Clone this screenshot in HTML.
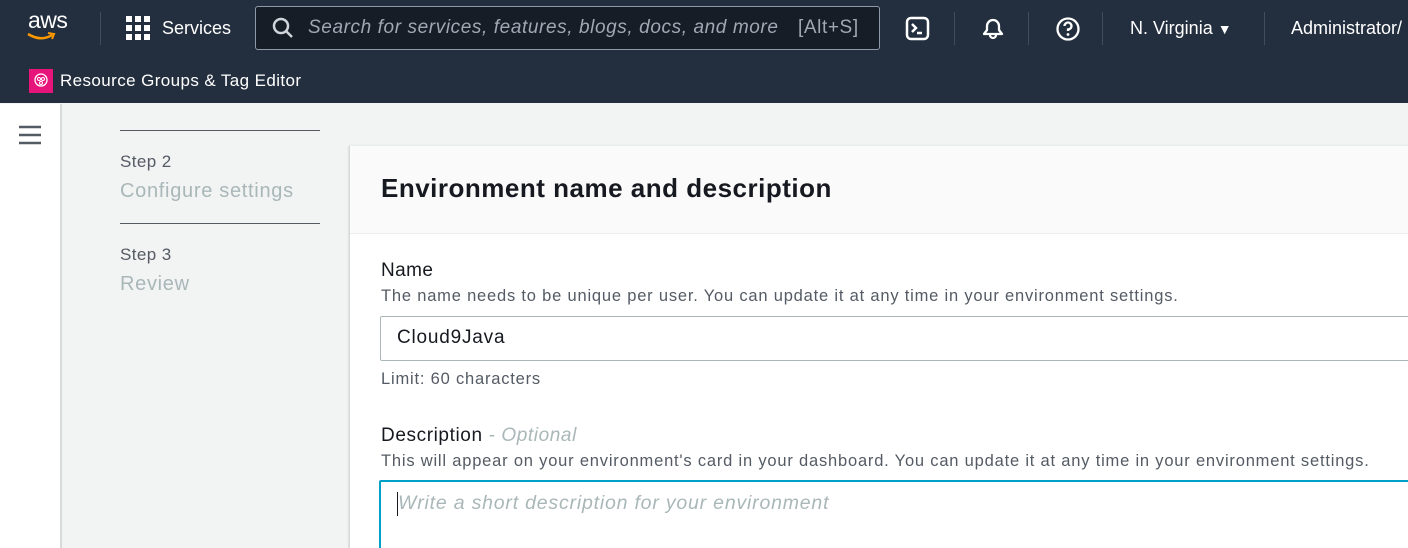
<!DOCTYPE html>
<html style="overflow:hidden;width:1408px;height:548px"><head><style>
body{margin:0;width:1408px;height:548px;overflow:hidden;background:#f2f3f3;font-family:"Liberation Sans",sans-serif;position:relative}
.top{position:absolute;left:0;top:0;width:1408px;height:103px;background:#232f3e;color:#fff}
.sep{position:absolute;top:12px;width:1px;height:33px;background:#414d5c}
.t{position:absolute;white-space:nowrap}
.d{font-size:16.5px;letter-spacing:0.8px;color:#545b64}
</style></head><body>
<div class="top">
 <div class="t" style="left:28px;top:7px;font-size:23px;letter-spacing:-0.5px">aws</div>
 <svg style="position:absolute;left:26px;top:31px" width="30" height="12"><path d="M2 3 Q15 11 26 4" stroke="#ff9900" stroke-width="2.5" fill="none"/><path d="M22 2 L28 3 L26 8" stroke="#ff9900" stroke-width="2" fill="none"/></svg>
 <div class="sep" style="left:100px"></div>
 <svg style="position:absolute;left:126px;top:16px" width="24" height="24" fill="#fff"><rect x="0" y="0" width="6" height="6"/><rect x="9" y="0" width="6" height="6"/><rect x="18" y="0" width="6" height="6"/><rect x="0" y="9" width="6" height="6"/><rect x="9" y="9" width="6" height="6"/><rect x="18" y="9" width="6" height="6"/><rect x="0" y="18" width="6" height="6"/><rect x="9" y="18" width="6" height="6"/><rect x="18" y="18" width="6" height="6"/></svg>
 <div class="t" style="left:162px;top:18px;font-size:18px">Services</div>
 <div style="position:absolute;left:255px;top:6px;width:623px;height:42px;background:#161d26;border:1px solid #8d99a8;border-radius:3px"></div>
 <svg style="position:absolute;left:272px;top:17px" width="22" height="22"><circle cx="9" cy="9" r="7" stroke="#d1d5db" stroke-width="2.5" fill="none"/><path d="M14 14 L20 20" stroke="#d1d5db" stroke-width="2.5"/></svg>
 <div class="t" style="left:308px;top:17px;font-size:19px;font-style:italic;color:#a0a8b4;letter-spacing:0.6px">Search for services, features, blogs, docs, and more</div>
 <div class="t" style="left:798px;top:17px;font-size:19px;color:#a0a8b4;letter-spacing:0.6px">[Alt+S]</div>
 <svg style="position:absolute;left:905px;top:16px" width="26" height="26"><rect x="2" y="2" width="21" height="21" rx="4" stroke="#fff" stroke-width="2.5" fill="none"/><path d="M7 8 L11 12 L7 16 M12 17 H17" stroke="#fff" stroke-width="2.5" fill="none"/></svg>
 <div class="sep" style="left:954px"></div>
 <svg style="position:absolute;left:980px;top:16px" width="26" height="26"><path d="M4 18 L7 14 V10 A6 6 0 0 1 19 10 V14 L22 18 Z" stroke="#fff" stroke-width="2.3" fill="none" stroke-linejoin="round"/><path d="M10 19 A3 3 0 0 0 16 19" stroke="#fff" stroke-width="2.3" fill="none"/></svg>
 <div class="sep" style="left:1028px"></div>
 <svg style="position:absolute;left:1055px;top:16px" width="26" height="26"><circle cx="13" cy="13" r="10.5" stroke="#fff" stroke-width="2.3" fill="none"/><path d="M9.5 10 A3.5 3.5 0 1 1 13 13.5 V15" stroke="#fff" stroke-width="2.3" fill="none"/><circle cx="13" cy="18.5" r="1.4" fill="#fff"/></svg>
 <div class="sep" style="left:1102px"></div>
 <div class="t" style="left:1130px;top:18px;font-size:18px">N. Virginia <span style="font-size:14px">▼</span></div>
 <div class="sep" style="left:1264px"></div>
 <div class="t" style="left:1291px;top:18px;font-size:18px">Administrator/</div>
 <div style="position:absolute;left:29px;top:69px;width:24px;height:24px;background:#e7157b"></div>
 <svg style="position:absolute;left:29px;top:69px" width="24" height="24"><circle cx="12" cy="11" r="6" stroke="#fff" stroke-width="1.3" fill="none"/><circle cx="10" cy="10" r="1.5" stroke="#fff" fill="none"/><circle cx="14" cy="10" r="1.5" stroke="#fff" fill="none"/><circle cx="12" cy="14" r="1.5" stroke="#fff" fill="none"/></svg>
 <div class="t" style="left:60px;top:71px;font-size:17px;letter-spacing:0.4px">Resource Groups &amp; Tag Editor</div>
</div>
<div style="position:absolute;left:0;top:104px;width:60px;height:444px;background:#fff;border-right:2px solid #d5dbdb"></div>
<svg style="position:absolute;left:19px;top:125px" width="22" height="20"><path d="M0 2H22M0 10H22M0 18H22" stroke="#545b64" stroke-width="2.5"/></svg>
<div style="position:absolute;left:120px;top:130px;width:200px;height:1px;background:#545b64"></div>
<div class="t" style="left:120px;top:152px;font-size:17px;color:#545b64;letter-spacing:0.4px">Step 2</div>
<div class="t" style="left:120px;top:180px;font-size:20px;color:#aab7b8;letter-spacing:0.7px">Configure settings</div>
<div style="position:absolute;left:120px;top:223px;width:200px;height:1px;background:#545b64"></div>
<div class="t" style="left:120px;top:245px;font-size:17px;color:#545b64;letter-spacing:0.4px">Step 3</div>
<div class="t" style="left:120px;top:273px;font-size:20px;color:#aab7b8;letter-spacing:0.7px">Review</div>
<div style="position:absolute;left:349px;top:145px;width:1059px;height:403px;background:#fff;border-left:1px solid #d5dbdb;border-top:1px solid #eaeded;box-shadow:0 1px 2px rgba(0,0,0,.2)"></div>
<div style="position:absolute;left:350px;top:146px;width:1058px;height:87px;background:#fafafa;border-bottom:1px solid #eaeded"></div>
<div class="t" style="left:381px;top:173px;font-size:26px;font-weight:bold;color:#16191f;letter-spacing:0.5px">Environment name and description</div>
<div class="t" style="left:381px;top:260px;font-size:19px;color:#16191f;letter-spacing:0.4px">Name</div>
<div class="t d" style="left:381px;top:287px">The name needs to be unique per user. You can update it at any time in your environment settings.</div>
<div style="position:absolute;left:380px;top:316px;width:1040px;height:43px;border:1px solid #aab7b8;border-radius:2px;background:#fff"></div>
<div class="t" style="left:397px;top:327px;font-size:19px;color:#16191f;letter-spacing:0.8px">Cloud9Java</div>
<div class="t d" style="left:381px;top:370px">Limit: 60 characters</div>
<div class="t" style="left:381px;top:425px;font-size:19px;color:#16191f;letter-spacing:0.6px">Description <i style="color:#aab7b8">- Optional</i></div>
<div class="t d" style="left:381px;top:452px">This will appear on your environment's card in your dashboard. You can update it at any time in your environment settings.</div>
<div style="position:absolute;left:379px;top:480px;width:1040px;height:80px;border:2px solid #00a1c9;border-radius:2px;background:#fff"></div>
<div style="position:absolute;left:397px;top:492px;width:1px;height:24px;background:#16191f"></div>
<div class="t" style="left:398px;top:492px;font-size:19.5px;font-style:italic;color:#aab7b8;letter-spacing:0.8px">Write a short description for your environment</div>
</body></html>
